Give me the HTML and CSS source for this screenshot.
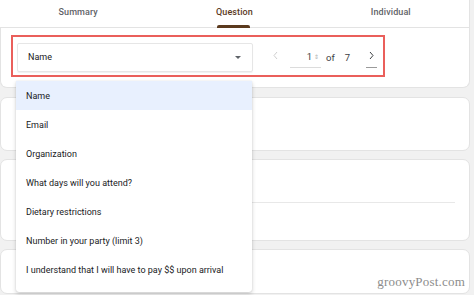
FILE: index.html
```html
<!DOCTYPE html>
<html>
<head>
<meta charset="utf-8">
<link rel="stylesheet" href="styles.css">
</head>
<body>
<div class="page">
  <div class="tabs">
    <div class="tab">Summary</div>
    <div class="tab active">Question</div>
    <div class="tab">Individual</div>
  </div>
  <div class="card card-select">
    <div class="highlight">
      <div class="select">
        <span class="select-label">Name</span>
        <svg class="caret" width="6" height="3" viewBox="0 0 6 3"><path d="M0 0h6L3 3z" fill="#5f6368"/></svg>
      </div>
      <div class="pager">
        <svg class="chev prev" width="5" height="9" viewBox="0 0 5 9"><path d="M4 1L1 4.5 4 8" fill="none" stroke="#cfcfcf" stroke-width="1"/></svg>
        <div class="num-input"><span class="num">1</span><span class="spin">&#8661;</span></div>
        <span class="of">of</span>
        <span class="total">7</span>
        <div class="next"><svg class="chev" width="5" height="9" viewBox="0 0 5 9"><path d="M1 1l3 3.5L1 8" fill="none" stroke="#3c4043" stroke-width="1"/></svg></div>
      </div>
    </div>
  </div>
  <div class="card card-2"></div>
  <div class="card card-3"><div class="divider"></div></div>
  <div class="card card-4"><span class="watermark">groovyPost.com</span></div>

  <ul class="menu">
    <li class="selected">Name</li>
    <li>Email</li>
    <li>Organization</li>
    <li>What days will you attend?</li>
    <li>Dietary restrictions</li>
    <li>Number in your party (limit 3)</li>
    <li>I understand that I will have to pay $$ upon arrival</li>
  </ul>
</div>
</body>
</html>
```

FILE: styles.css
```css
* { box-sizing: border-box; }
html, body {
  margin: 0;
  padding: 0;
  background: #f1f1f1;
  font-family: Roboto, "Liberation Sans", Arial, sans-serif;
  color: #202124;
  overflow: hidden;
}
.page {
  position: relative;
  width: 470px;
  height: 295px;
  display: flex;
  flex-direction: column;
}
.tabs {
  height: 28px;
  background: #fff;
  border-bottom: 1px solid #e3e3e3;
  border-right: 1px solid #e3e3e3;
  display: grid;
  grid-template-columns: 1fr 1fr 1fr;
}
.tab {
  position: relative;
  text-align: center;
  font-size: 9px;
  font-weight: 500;
  color: #5f6368;
  padding-top: 7px;
  letter-spacing: 0.1px;
}
.tab.active { color: #5b3a1e; }
.tab.active::after {
  content: "";
  position: absolute;
  left: 50%;
  bottom: -1px;
  width: 33px;
  margin-left: -17px;
  height: 3px;
  background: #5b3a1e;
  border-radius: 2px 2px 0 0;
}
.card {
  background: #fff;
  border: 1px solid #e3e3e3;
  border-radius: 7px;
}
.card-select {
  height: 60px;
  border-top: none;
  border-radius: 0 0 7px 7px;
  padding: 7px 0 0 10px;
}
.highlight {
  width: 374px;
  height: 42px;
  border: 2px solid #ea5f5b;
  display: flex;
  align-items: center;
  padding: 5px 0 3px 4px;
}
.select {
  width: 236px;
  height: 29px;
  border: 1px solid #e6e6e6;
  border-radius: 2px;
  box-shadow: 0 1px 1px rgba(0,0,0,0.06);
  display: flex;
  align-items: center;
  padding: 0 11px 0 10px;
  font-size: 9px;
}
.select-label { flex: 1; }
.caret { display: block; }
.pager {
  display: flex;
  align-items: center;
  height: 100%;
  font-size: 9.5px;
  color: #3c4043;
  margin-left: 20px;
}
.prev { margin-top: -4px; }
.num-input {
  width: 31px;
  margin-left: 12px;
  height: 22px;
  border-bottom: 1px solid #dcdcdc;
  display: flex;
  align-items: center;
  justify-content: flex-end;
  padding-right: 2px;
}
.num { margin-right: 2px; }
.spin { font-size: 6px; color: #b0b0b0; }
.of { margin-left: 5px; }
.total { margin-left: 10px; }
.next {
  margin-left: 16px;
  width: 11px;
  height: 22px;
  border-bottom: 1px solid #9a9a9a;
  display: flex;
  justify-content: center;
  align-items: flex-start;
  padding-top: 5px;
}
.card-2 { margin-top: 9px; height: 54px; }
.card-3 { margin-top: 8px; height: 82px; position: relative; }
.divider {
  position: absolute;
  left: 24px;
  right: 14px;
  top: 42px;
  height: 1px;
  background: #e8e8e8;
}
.card-4 {
  margin-top: 8px;
  height: 45px;
  position: relative;
}
.watermark {
  position: absolute;
  right: 4px;
  bottom: 3px;
  font-family: "Liberation Serif", "DejaVu Serif", serif;
  font-size: 13px;
  color: #8c8c8c;
  letter-spacing: 0.2px;
}
.menu {
  position: absolute;
  left: 16px;
  top: 81px;
  width: 236px;
  margin: 0;
  padding: 0 0 8px 0;
  list-style: none;
  background: #fff;
  border-radius: 0 0 3px 3px;
  box-shadow: 0 2px 4px rgba(0,0,0,0.18), 0 0 1px rgba(0,0,0,0.2);
}
.menu li {
  height: 29px;
  line-height: 30px;
  padding-left: 10px;
  font-size: 9px;
  color: #202124;
  white-space: nowrap;
}
.menu li.selected { background: #e8f0fe; }
```
